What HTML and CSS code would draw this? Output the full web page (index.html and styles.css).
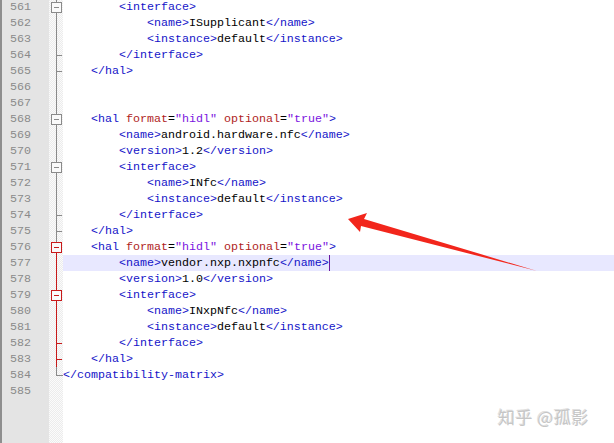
FILE: index.html
```html
<!DOCTYPE html>
<html lang="en">

<head>
    <meta charset="UTF-8">
    <title>compatibility_matrix.xml</title>
    <link rel="stylesheet" href="styles.css">
</head>

<body>

    <div class="editor">
        <!-- line numbers -->
        <div class="numbers">
            <div>561</div><div>562</div><div>563</div><div>564</div><div>565</div>
            <div>566</div><div>567</div><div>568</div><div>569</div><div>570</div>
            <div>571</div><div>572</div><div>573</div><div>574</div><div>575</div>
            <div>576</div><div>577</div><div>578</div><div>579</div><div>580</div>
            <div>581</div><div>582</div><div>583</div><div>584</div><div>585</div>
        </div>

        <!-- fold margin -->
        <div class="folds">
            <div class="f line"><span class="box"></span></div>
            <div class="f line"></div>
            <div class="f line"></div>
            <div class="f line tick"></div>
            <div class="f line tick"></div>
            <div class="f line"></div>
            <div class="f line"></div>
            <div class="f line"><span class="box"></span></div>
            <div class="f line"></div>
            <div class="f line"></div>
            <div class="f line"><span class="box"></span></div>
            <div class="f line"></div>
            <div class="f line"></div>
            <div class="f line tick"></div>
            <div class="f line tick"></div>
            <div class="f line red-bottom"><span class="box red"></span></div>
            <div class="f line red"></div>
            <div class="f line red"></div>
            <div class="f line red"><span class="box red"></span></div>
            <div class="f line red"></div>
            <div class="f line red"></div>
            <div class="f line red tick"></div>
            <div class="f line red tick"></div>
            <div class="f end"></div>
            <div class="f"></div>
        </div>

        <!-- source -->
        <div class="code">
            <div class="ln">        <b>&lt;interface&gt;</b></div>
            <div class="ln">            <b>&lt;name&gt;</b>ISupplicant<b>&lt;/name&gt;</b></div>
            <div class="ln">            <b>&lt;instance&gt;</b>default<b>&lt;/instance&gt;</b></div>
            <div class="ln">        <b>&lt;/interface&gt;</b></div>
            <div class="ln">    <b>&lt;/hal&gt;</b></div>
            <div class="ln"></div>
            <div class="ln"></div>
            <div class="ln">    <b>&lt;hal</b> <i>format</i>=<u>"hidl"</u> <i>optional</i>=<u>"true"</u><b>&gt;</b></div>
            <div class="ln">        <b>&lt;name&gt;</b>android.hardware.nfc<b>&lt;/name&gt;</b></div>
            <div class="ln">        <b>&lt;version&gt;</b>1.2<b>&lt;/version&gt;</b></div>
            <div class="ln">        <b>&lt;interface&gt;</b></div>
            <div class="ln">            <b>&lt;name&gt;</b>INfc<b>&lt;/name&gt;</b></div>
            <div class="ln">            <b>&lt;instance&gt;</b>default<b>&lt;/instance&gt;</b></div>
            <div class="ln">        <b>&lt;/interface&gt;</b></div>
            <div class="ln">    <b>&lt;/hal&gt;</b></div>
            <div class="ln">    <b>&lt;hal</b> <i>format</i>=<u>"hidl"</u> <i>optional</i>=<u>"true"</u><b>&gt;</b></div>
            <div class="ln current">        <b>&lt;name&gt;</b>vendor.nxp.nxpnfc<b>&lt;/name&gt;</b><span class="caret"></span></div>
            <div class="ln">        <b>&lt;version&gt;</b>1.0<b>&lt;/version&gt;</b></div>
            <div class="ln">        <b>&lt;interface&gt;</b></div>
            <div class="ln">            <b>&lt;name&gt;</b>INxpNfc<b>&lt;/name&gt;</b></div>
            <div class="ln">            <b>&lt;instance&gt;</b>default<b>&lt;/instance&gt;</b></div>
            <div class="ln">        <b>&lt;/interface&gt;</b></div>
            <div class="ln">    <b>&lt;/hal&gt;</b></div>
            <div class="ln"><b>&lt;/compatibility-matrix&gt;</b></div>
            <div class="ln"></div>
        </div>
    </div>

    <!-- annotation on top of the screenshot -->
    <svg class="arrow" width="614" height="443" viewBox="0 0 614 443">
        <polygon points="348,219 367,213 364,219 537,271 361,226 360,232" fill="#f2261c" />
    </svg>

    <div class="watermark">知乎 @孤影</div>

</body>

</html>
```

FILE: styles.css
```css
body,
html {
    margin: 0;
    padding: 0;
    width: 100%;
    height: 100%;
    overflow: hidden;
    background: #fff;
}

.editor {
    display: flex;
    height: 460px;
    margin-top: -1px;
    font-family: "Liberation Mono", monospace;
    font-size: 11.67px;
    line-height: 16px;
}

.numbers {
    width: 29px;
    padding-right: 18px;
    border-left: 2px solid #8e8e8e;
    background-color: #e4e4e4;
    color: #8a8a8a;
    text-align: right;
}

.numbers div {
    height: 16px;
}

.folds {
    width: 14px;
    background: repeating-conic-gradient(#ececec 0 25%, #fbfbfb 0 50%) 0 0 / 2px 2px;
}

.f {
    --top: #8a8a8a;
    --bot: #8a8a8a;
    height: 16px;
    display: flex;
    align-items: center;
}

.f.line {
    background:
        linear-gradient(var(--top), var(--top)) 7px 0 / 1px 8px no-repeat,
        linear-gradient(var(--bot), var(--bot)) 7px 8px / 1px 8px no-repeat;
}

.f.red {
    --top: #c81a1a;
    --bot: #c81a1a;
}

.f.red-bottom {
    --bot: #c81a1a;
}

.f.tick {
    background:
        linear-gradient(var(--top), var(--top)) 7px 0 / 1px 16px no-repeat,
        linear-gradient(var(--top), var(--top)) 8px 8px / 5px 1px no-repeat;
}

.f.end {
    background:
        linear-gradient(#8a8a8a, #8a8a8a) 7px 0 / 1px 9px no-repeat,
        linear-gradient(#8a8a8a, #8a8a8a) 7px 8px / 7px 1px no-repeat;
}

.box {
    width: 9px;
    height: 9px;
    margin-left: 2px;
    border: 1px solid #8a8a8a;
    background: linear-gradient(#8a8a8a, #8a8a8a) center / 5px 1px no-repeat, #fafafa;
}

.box.red {
    border-color: #c81a1a;
    background: linear-gradient(#c81a1a, #c81a1a) center / 5px 1px no-repeat, #fafafa;
}

.code {
    flex: 1;
    color: #000;
}

.ln {
    height: 16px;
    white-space: pre;
}

.ln.current {
    background-color: #e8e8ff;
}

.code b {
    font-weight: normal;
    color: #1414c8;
}

.code i {
    font-style: normal;
    color: #b01e1e;
}

.code u {
    text-decoration: none;
    color: #7a14e0;
}

.caret {
    display: inline-block;
    width: 1px;
    height: 16px;
    vertical-align: top;
    background-color: #6a1aa0;
}

.arrow {
    position: absolute;
    left: 0;
    top: 0;
}

.watermark {
    position: absolute;
    left: 498px;
    top: 404px;
    font-family: "Noto Sans CJK SC", sans-serif;
    font-size: 17px;
    color: #c6c6c6;
    text-shadow: 1px 1px 0 #fff, -1px -1px 0 #e0e0e0;
    letter-spacing: 0.5px;
}
```
